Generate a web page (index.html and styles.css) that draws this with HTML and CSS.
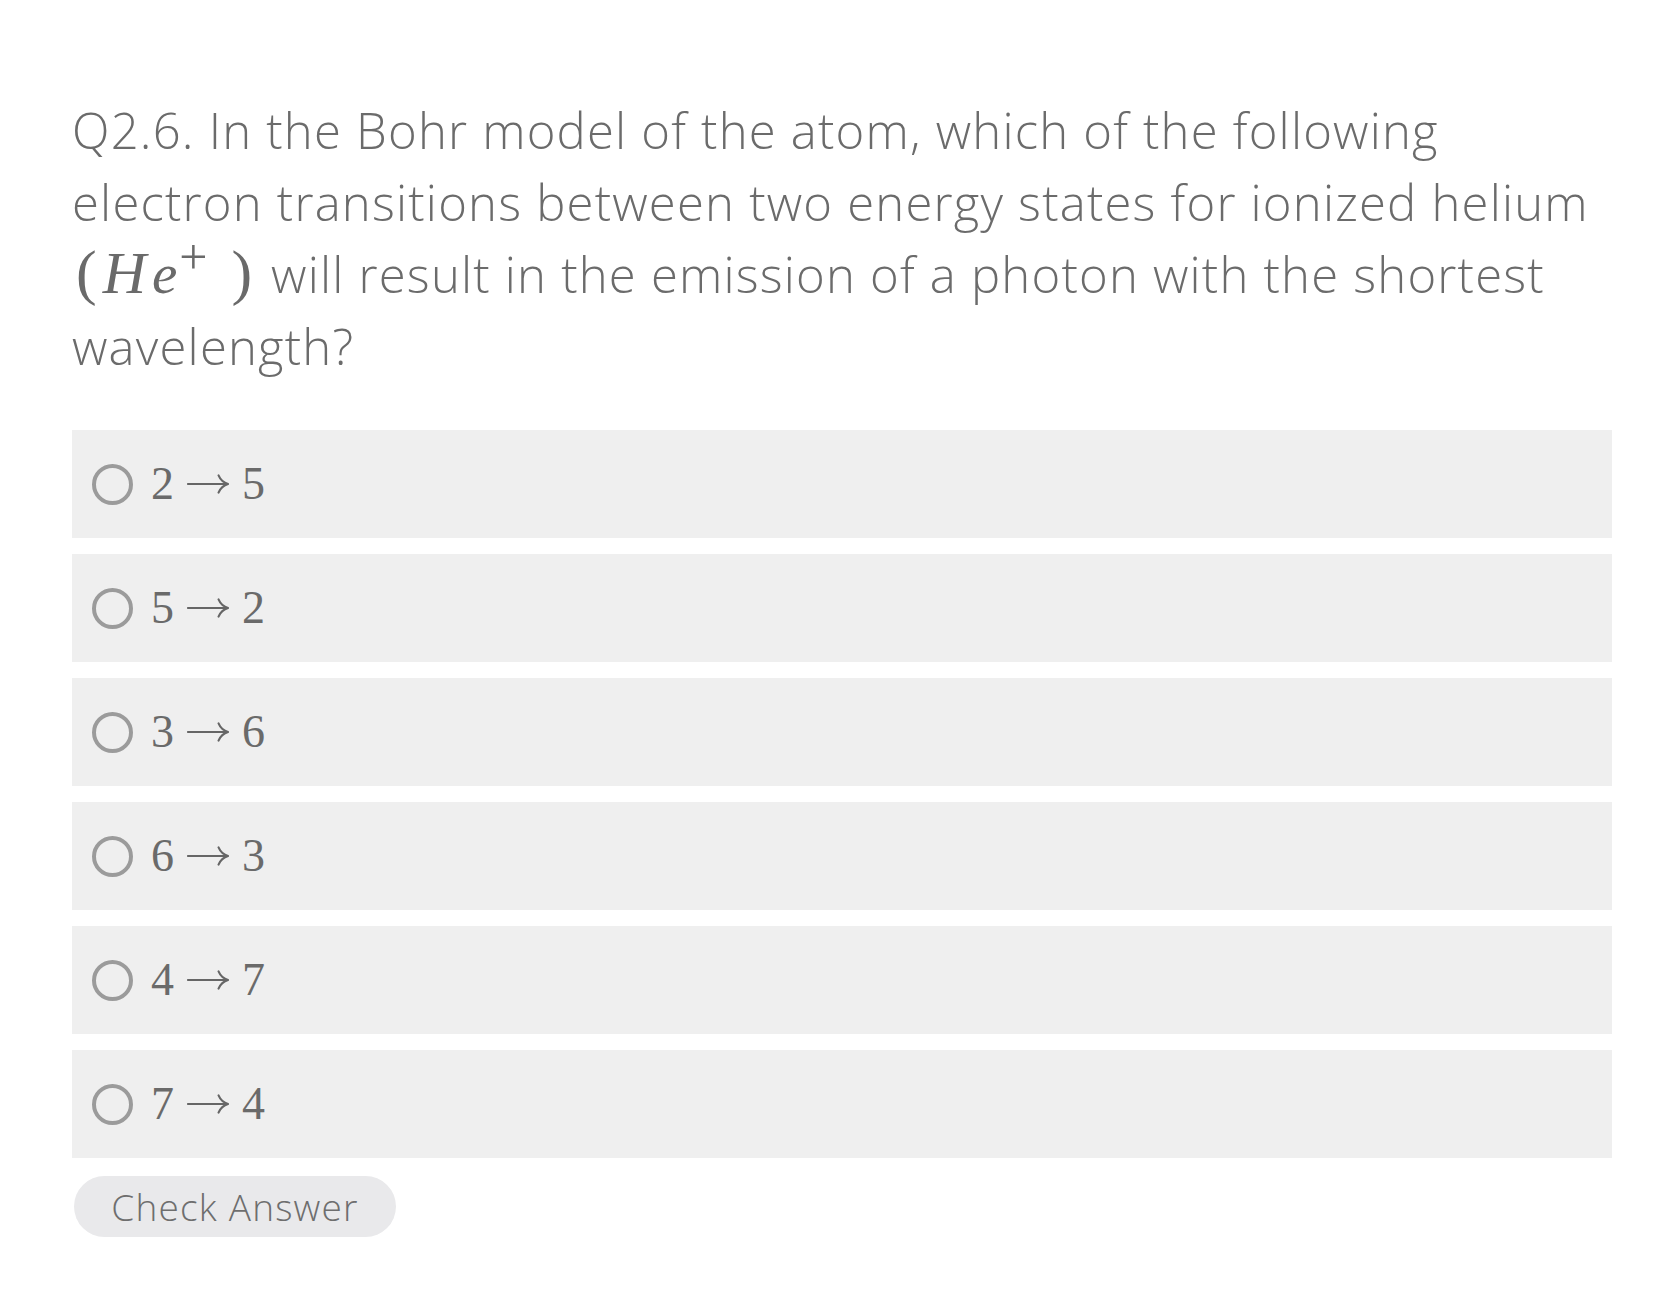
FILE: index.html
```html
<!DOCTYPE html>
<html lang="en">
<head>
<meta charset="utf-8">
<title>Q2.6</title>
<link rel="stylesheet" href="styles.css">
</head>
<body>
<main class="quiz">
  <p class="question">Q2.6. In the Bohr model of the atom, which of the following electron transitions between two energy states for ionized helium <span class="math mq"><span class="paren lp">(</span><span class="mi mh">H</span><span class="mi me">e</span><span class="sup">+</span><span class="paren rp">)</span></span> will result in the emission of a photon with the shortest wavelength?</p>

  <ul class="options">
    <li class="option"><span class="radio"></span><span class="math mo"><span>2</span><svg class="arrow" viewBox="0 0 46 24"><path d="M2 12 H43 M34 3 Q37 10 44 12 Q37 14 34 21"/></svg><span>5</span></span></li>
    <li class="option"><span class="radio"></span><span class="math mo"><span>5</span><svg class="arrow" viewBox="0 0 46 24"><path d="M2 12 H43 M34 3 Q37 10 44 12 Q37 14 34 21"/></svg><span>2</span></span></li>
    <li class="option"><span class="radio"></span><span class="math mo"><span>3</span><svg class="arrow" viewBox="0 0 46 24"><path d="M2 12 H43 M34 3 Q37 10 44 12 Q37 14 34 21"/></svg><span>6</span></span></li>
    <li class="option"><span class="radio"></span><span class="math mo"><span>6</span><svg class="arrow" viewBox="0 0 46 24"><path d="M2 12 H43 M34 3 Q37 10 44 12 Q37 14 34 21"/></svg><span>3</span></span></li>
    <li class="option"><span class="radio"></span><span class="math mo"><span>4</span><svg class="arrow" viewBox="0 0 46 24"><path d="M2 12 H43 M34 3 Q37 10 44 12 Q37 14 34 21"/></svg><span>7</span></span></li>
    <li class="option"><span class="radio"></span><span class="math mo"><span>7</span><svg class="arrow" viewBox="0 0 46 24"><path d="M2 12 H43 M34 3 Q37 10 44 12 Q37 14 34 21"/></svg><span>4</span></span></li>
  </ul>

  <button class="check" type="button">Check Answer</button>
</main>
</body>
</html>
```

FILE: styles.css
```css
html, body {
  margin: 0;
  padding: 0;
  background: #ffffff;
}

.quiz {
  padding: 94px 66px 40px 72px;
  font-family: "Open Sans", "Noto Sans", sans-serif;
  color: #6b6b6b;
}

.question {
  margin: 0;
  font-size: 49px;
  line-height: 72px;
  font-weight: 350;
  letter-spacing: 1.2px;
}

.math {
  font-family: "Liberation Serif", "DejaVu Serif", serif;
  color: #6a6a6a;
  white-space: nowrap;
  letter-spacing: 0;
}

.mq {
  font-size: 57px;
  line-height: 0;
  font-weight: 400;
  margin-right: 5px;
}

.mq .paren {
  display: inline-block;
  font-size: 62px;
}

.mq .lp {
  margin-left: 4px;
}

.mq .rp {
  margin-left: 24px;
}

.mq .mi {
  display: inline-block;
  font-style: italic;
}

.mq .mh {
  font-size: 60px;
  margin-left: 6px;
  margin-right: 6px;
}

.mq .sup {
  display: inline-block;
  font-size: 50px;
  position: relative;
  top: -19px;
  margin-left: 2px;
}

.options {
  list-style: none;
  margin: 48px 0 0 0;
  padding: 0;
  display: flex;
  flex-direction: column;
  gap: 16px;
}

.option {
  height: 108px;
  box-sizing: border-box;
  background: #efefef;
  display: flex;
  align-items: center;
  padding: 0 20px;
  gap: 18px;
}

.radio {
  width: 41px;
  height: 41px;
  box-sizing: border-box;
  border: 4px solid #9b9b9b;
  border-radius: 50%;
  flex: none;
}

.mo {
  font-size: 46px;
  line-height: 1;
  display: flex;
  align-items: center;
  gap: 12px;
}

.arrow {
  width: 44px;
  height: 24px;
  fill: none;
  stroke: #666666;
  stroke-width: 2.2;
  stroke-linecap: round;
  stroke-linejoin: round;
}

.check {
  margin: 18px 0 0 2px;
  height: 61px;
  width: 322px;
  border: none;
  border-radius: 31px;
  background: #e9e9eb;
  color: #6e6e6e;
  font-family: "Open Sans", "Noto Sans", sans-serif;
  font-size: 37px;
  font-weight: 300;
  letter-spacing: 1.2px;
  padding: 0;
  cursor: pointer;
}
```
